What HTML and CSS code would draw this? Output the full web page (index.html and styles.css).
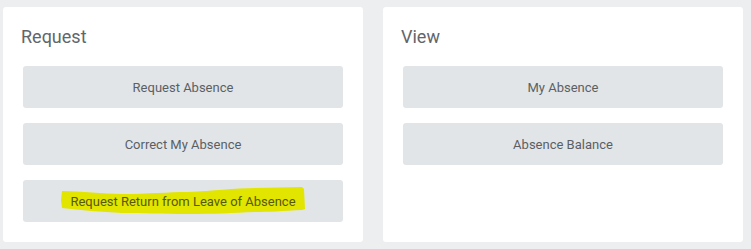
FILE: index.html
```html
<!DOCTYPE html>
<html lang="en">
<head>
  <meta charset="UTF-8" />
  <meta name="viewport" content="width=device-width, initial-scale=1.0"/>
  <title>Absence</title>
  <link rel="stylesheet" href="styles.css">
</head>
<body>
  <div class="cards">
    <div class="card">
      <h2>Request</h2>
      <div class="actions">
        <button class="action">Request Absence</button>
        <button class="action">Correct My Absence</button>
        <button class="action marked">
          <svg class="marker" width="320" height="42" viewBox="0 0 320 42">
            <path d="M39,11 C58,11 80,14 99,14 C125,14 145,12 165,12 C190,11 212,8 232,8 L279,7 L281,9 L282,29 L279,30 C260,31 245,32 232,32 C210,33 190,34 165,34 C140,34 120,33 99,33 C78,32 58,30 39,28 L38,20 Z" />
          </svg>
          <span class="label">Request Return from Leave of Absence</span>
        </button>
      </div>
    </div>

    <div class="card">
      <h2>View</h2>
      <div class="actions">
        <button class="action">My Absence</button>
        <button class="action">Absence Balance</button>
      </div>
    </div>
  </div>
</body>
</html>
```

FILE: styles.css
```css
* {
  box-sizing: border-box;
  margin: 0;
  padding: 0;
}

body {
  font-family: Roboto, "Liberation Sans", sans-serif;
  background: #eceef0;
  color: #5e6267;
}

.cards {
  display: flex;
  gap: 20px;
  padding: 7px 8px 0 3px;
}

.card {
  width: 360px;
  background: #ffffff;
  border-radius: 3px;
  padding: 18px 20px 20px;
}

h2 {
  font-size: 18px;
  font-weight: 400;
  line-height: 24px;
  margin: 0 0 17px -2px;
  color: #62666b;
}

.actions {
  display: flex;
  flex-direction: column;
  gap: 15px;
}

.action {
  position: relative;
  height: 42px;
  width: 100%;
  border: none;
  border-radius: 3px;
  background: #e1e5e8;
  font-family: inherit;
  font-size: 13px;
  color: #5b5f64;
  display: flex;
  align-items: center;
  justify-content: center;
}

.marker {
  position: absolute;
  top: 0;
  left: 0;
}

.marker path {
  fill: #e1e500;
}

.label {
  position: relative;
}

.marked .label {
  color: #56590a;
}
```
